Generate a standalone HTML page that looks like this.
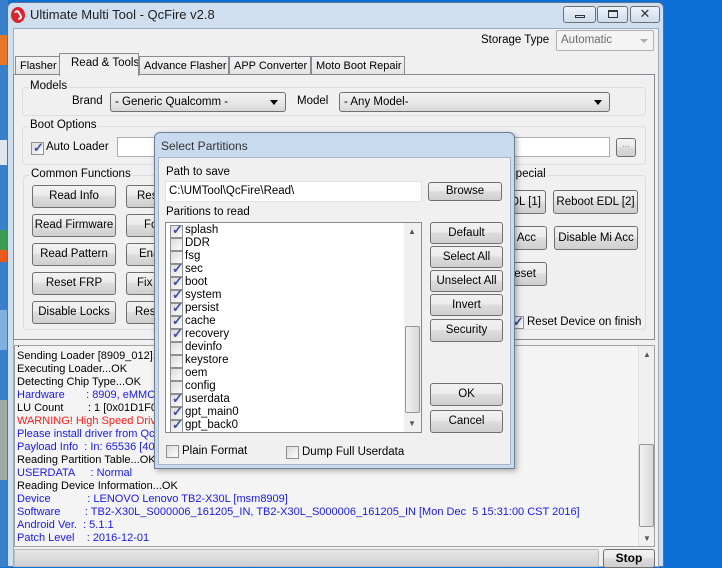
<!DOCTYPE html>
<html><head><meta charset="utf-8"><style>
*{box-sizing:border-box;margin:0;padding:0}
body{width:722px;height:567px;overflow:hidden;position:relative;background:#0b6fd6;font-family:"Liberation Sans",sans-serif;font-size:11px;color:#000}
.a{position:absolute;white-space:nowrap}
.btn{position:absolute;border:1px solid #707070;border-radius:3px;background:linear-gradient(#f2f2f2 0%,#ebebeb 45%,#dddddd 50%,#cfcfcf 100%);text-align:center;font-size:11.5px;white-space:nowrap;overflow:hidden}
.btn .rt{position:absolute;right:4px;top:0}
.grp{position:absolute;border:1px solid #d5dfe5;border-radius:4px}
.gl{position:absolute;background:#f0f0f0;padding:0 2px;font-size:11.5px;top:-8px;left:5px;white-space:nowrap}
.cb{position:absolute;width:13px;height:13px;border:1px solid #8e8f8f;background:linear-gradient(135deg,#dcdcdc,#fbfbfb)}
.cb.c::after{content:"✓";position:absolute;left:1px;top:-3px;font-size:13px;color:#3b4fa8;font-weight:bold}
.cmb{position:absolute;border:1px solid #707070;border-radius:3px;background:linear-gradient(#f2f2f2,#e8e8e8 50%,#d8d8d8);font-size:11.5px;padding:3px 4px;white-space:nowrap}
.cmb::after{content:"";position:absolute;right:7px;top:7px;border:4px solid transparent;border-top:5px solid #000}
.tab{position:absolute;top:56px;height:19px;border:1px solid #898c95;border-bottom:none;background:linear-gradient(#f3f3f3,#e3e3e3);font-size:11px;padding:3px 0 0 4px;white-space:nowrap;overflow:hidden}
.log div{height:13px;line-height:13px;white-space:nowrap;font-size:11px}
.b{color:#1a1ae6}.r{color:#ff1a1a}
.li{position:absolute;left:4px;height:13px;font-size:11.5px;line-height:13px;white-space:nowrap}
.li .cb{left:0;top:0}.li span{position:absolute;left:15px;top:-1px}
.lbl{font-size:11.5px}
</style></head><body>
<div class="a" style="left:0;top:0;width:8px;height:567px;background:#3a7fc9"></div>
<div class="a" style="left:0;top:35px;width:7px;height:30px;background:#e9772a"></div>
<div class="a" style="left:0;top:140px;width:7px;height:25px;background:#dfe6ee"></div>
<div class="a" style="left:0;top:230px;width:7px;height:20px;background:#3c9a52"></div>
<div class="a" style="left:0;top:250px;width:7px;height:12px;background:#e85b1d"></div>
<div class="a" style="left:0;top:310px;width:7px;height:40px;background:#7fb0e0"></div>
<div class="a" style="left:0;top:400px;width:7px;height:80px;background:#9ea9a8"></div>
<div class="a" style="left:7px;top:2px;width:657px;height:565px;background:#cfdff0;border:1px solid #5d7290;border-radius:6px 6px 0 0"></div>
<div class="a" style="left:13px;top:28px;width:646px;height:539px;background:#f0f0f0;border:1px solid #9aabbf"></div>
<div class="a" style="left:11px;top:7px;width:14px;height:16px;border-radius:50%;background:#d8262f"></div>
<div class="a" style="left:15px;top:10px;width:6px;height:10px;border:2px solid #fff;border-radius:4px;border-left-color:transparent;transform:rotate(-30deg)"></div>
<div class="a" style="left:30px;top:7px;font-size:13px;color:#1e1e1e">Ultimate Multi Tool - QcFire v2.8</div>
<div class="btn" style="left:563px;top:6px;width:33px;height:17px;background:linear-gradient(#eef3fa,#cfdcec)"><div class="a" style="left:11px;top:8px;width:10px;height:3px;border:1px solid #333"></div></div>
<div class="btn" style="left:597px;top:6px;width:31px;height:17px;background:linear-gradient(#eef3fa,#cfdcec)"><div class="a" style="left:10px;top:3px;width:10px;height:8px;border:1px solid #333;border-top-width:2px"></div></div>
<div class="btn" style="left:630px;top:6px;width:30px;height:17px;background:linear-gradient(#eef3fa,#cfdcec);font-size:13px;line-height:14px;color:#333">✕</div>
<div class="a lbl" style="left:481px;top:34px">Storage Type</div>
<div class="a" style="left:556px;top:30px;width:98px;height:21px;border:1px solid #adb2b5;border-radius:2px;background:#f4f4f4;color:#6d6d6d;font-size:11.5px;padding:3px 4px">Automatic<div class="a" style="right:5px;top:8px;border:4px solid transparent;border-top:4px solid #aaa"></div></div>
<div class="tab" style="left:15px;width:45px">Flasher</div>
<div class="tab" style="left:139px;width:90px">Advance Flasher</div>
<div class="tab" style="left:229px;width:82px">APP Converter</div>
<div class="tab" style="left:311px;width:94px">Moto Boot Repair</div>
<div class="a" style="left:13px;top:74px;width:642px;height:266px;border:1px solid #898c95;background:#fff"></div>
<div class="a" style="left:14px;top:75px;width:640px;height:264px;background:#f0f0f0"></div>
<div class="tab" style="left:59px;top:53px;width:80px;height:23px;background:#f0f0f0;border-color:#898c95;padding-left:11px;font-size:11.5px">Read &amp; Tools</div>
<div class="grp" style="left:22px;top:87px;width:624px;height:29px"><span class="gl">Models</span></div>
<div class="a lbl" style="left:72px;top:95px">Brand</div>
<div class="cmb" style="left:110px;top:92px;width:176px;height:20px">- Generic Qualcomm -</div>
<div class="a lbl" style="left:297px;top:95px">Model</div>
<div class="cmb" style="left:339px;top:92px;width:271px;height:20px">- Any Model-</div>
<div class="grp" style="left:22px;top:126px;width:624px;height:39px"><span class="gl">Boot Options</span></div>
<div class="cb c" style="left:31px;top:142px"></div>
<div class="a lbl" style="left:46px;top:141px">Auto Loader</div>
<div class="a" style="left:117px;top:137px;width:493px;height:20px;border:1px solid #abadb3;background:#fff"></div>
<div class="btn" style="left:616px;top:138px;width:20px;height:19px;color:#888;font-size:10px">...</div>
<div class="grp" style="left:23px;top:175px;width:623px;height:155px"><span class="gl">Common Functions</span></div>
<div class="a lbl" style="left:506px;top:168px;background:#f0f0f0;padding:0 2px">Special</div>
<div class="btn" style="left:32px;top:185px;width:84px;height:23px;line-height:21px">Read Info</div>
<div class="btn" style="left:32px;top:214px;width:84px;height:23px;line-height:21px">Read Firmware</div>
<div class="btn" style="left:32px;top:243px;width:84px;height:23px;line-height:21px">Read Pattern</div>
<div class="btn" style="left:32px;top:272px;width:84px;height:23px;line-height:21px">Reset FRP</div>
<div class="btn" style="left:32px;top:301px;width:84px;height:23px;line-height:21px">Disable Locks</div>
<div class="btn" style="left:126px;top:185px;width:60px;height:23px;line-height:21px;text-align:left;padding-left:10px">Reset</div>
<div class="btn" style="left:126px;top:214px;width:60px;height:23px;line-height:21px;text-align:left;padding-left:17px">Format</div>
<div class="btn" style="left:126px;top:243px;width:60px;height:23px;line-height:21px;text-align:left;padding-left:12px">Enable</div>
<div class="btn" style="left:126px;top:272px;width:60px;height:23px;line-height:21px;text-align:left;padding-left:10px">Fix Stock</div>
<div class="btn" style="left:126px;top:301px;width:60px;height:23px;line-height:21px;text-align:left;padding-left:8px">Restore</div>
<div class="btn" style="left:480px;top:190px;width:66px;height:24px;line-height:22px"><span class="rt">Reboot EDL [1]</span></div>
<div class="btn" style="left:553px;top:190px;width:85px;height:24px;line-height:22px">Reboot EDL [2]</div>
<div class="btn" style="left:480px;top:226px;width:67px;height:24px;line-height:22px"><span class="rt" style="right:10px">Enable Mi Acc</span></div>
<div class="btn" style="left:554px;top:226px;width:84px;height:24px;line-height:22px">Disable Mi Acc</div>
<div class="btn" style="left:480px;top:262px;width:67px;height:24px;line-height:22px"><span class="rt" style="right:10px">Reset</span></div>
<div class="cb c" style="left:511px;top:316px"></div>
<div class="a lbl" style="left:527px;top:316px">Reset Device on finish</div>
<div class="a" style="left:14px;top:345px;width:641px;height:202px;border:1px solid #a0a0a0;background:#f4f4f4;overflow:hidden">
<div class="log a" style="left:2px;top:-8px;width:620px;overflow:hidden">
<div style="height:12px">.</div>
<div>Sending Loader [8909_012]...OK</div>
<div>Executing Loader...OK</div>
<div>Detecting Chip Type...OK</div>
<div class="b">Hardware&nbsp;&nbsp;&nbsp;&nbsp;&nbsp;&nbsp;&nbsp;: 8909, eMMC, 16 GiB</div>
<div>LU Count&nbsp;&nbsp;&nbsp;&nbsp;&nbsp;&nbsp;&nbsp;&nbsp;: 1 [0x01D1F000]</div>
<div class="r">WARNING! High Speed Driver not found!</div>
<div class="b">Please install driver from QcFire folder</div>
<div class="b">Payload Info&nbsp;&nbsp;: In: 65536 [4096] Out: 1048576</div>
<div>Reading Partition Table...OK</div>
<div class="b">USERDATA&nbsp;&nbsp;&nbsp;&nbsp;&nbsp;: Normal</div>
<div>Reading Device Information...OK</div>
<div class="b">Device&nbsp;&nbsp;&nbsp;&nbsp;&nbsp;&nbsp;&nbsp;&nbsp;&nbsp;&nbsp;&nbsp;&nbsp;: LENOVO Lenovo TB2-X30L [msm8909]</div>
<div class="b">Software&nbsp;&nbsp;&nbsp;&nbsp;&nbsp;&nbsp;&nbsp;&nbsp;: TB2-X30L_S000006_161205_IN, TB2-X30L_S000006_161205_IN [Mon Dec&nbsp; 5 15:31:00 CST 2016]</div>
<div class="b">Android Ver.&nbsp;&nbsp;: 5.1.1</div>
<div class="b">Patch Level&nbsp;&nbsp;&nbsp;&nbsp;: 2016-12-01</div>
</div>
<div class="a" style="left:623px;top:0;width:17px;height:200px;background:#efefef;border-left:1px solid #e0e0e0"></div>
<div class="a" style="left:628px;top:4px;font-size:8px;color:#555">▲</div>
<div class="a" style="left:628px;top:188px;font-size:8px;color:#555">▼</div>
<div class="a" style="left:624px;top:98px;width:15px;height:83px;border:1px solid #979797;border-radius:2px;background:linear-gradient(90deg,#f2f2f2,#d8d8d8)"></div>
</div>
<div class="a" style="left:14px;top:549px;width:585px;height:18px;border:1px solid #bcbcbc;border-radius:2px;background:linear-gradient(#e6e6e6,#d0d0d0)"></div>
<div class="btn" style="left:603px;top:549px;width:52px;height:19px;font-weight:bold;line-height:17px;font-size:12px">Stop</div>
<div class="a" style="left:154px;top:132px;width:361px;height:337px;background:#c8daee;border:1px solid #6d7f95;border-radius:6px 6px 0 0;box-shadow:2px 2px 6px rgba(0,0,0,.3)"></div>
<div class="a" style="left:161px;top:139px;font-size:12px;color:#333">Select Partitions</div>
<div class="a" style="left:158px;top:157px;width:353px;height:308px;background:#f0f0f0;border:1px solid #a7b5c5"></div>
<div class="a lbl" style="left:166px;top:166px">Path to save</div>
<div class="a" style="left:165px;top:181px;width:257px;height:21px;border:1px solid #e3e3e3;background:#fff;font-size:11.5px;padding:3px 3px">C:\UMTool\QcFire\Read\</div>
<div class="btn" style="left:428px;top:182px;width:74px;height:19px;line-height:17px">Browse</div>
<div class="a lbl" style="left:166px;top:206px">Paritions to read</div>
<div class="a" style="left:165px;top:222px;width:257px;height:211px;border:1px solid #828790;background:#fff;overflow:hidden">
<div class="li" style="top:2px"><div class="cb c"></div><span>splash</span></div>
<div class="li" style="top:15px"><div class="cb"></div><span>DDR</span></div>
<div class="li" style="top:28px"><div class="cb"></div><span>fsg</span></div>
<div class="li" style="top:41px"><div class="cb c"></div><span>sec</span></div>
<div class="li" style="top:54px"><div class="cb c"></div><span>boot</span></div>
<div class="li" style="top:67px"><div class="cb c"></div><span>system</span></div>
<div class="li" style="top:80px"><div class="cb c"></div><span>persist</span></div>
<div class="li" style="top:93px"><div class="cb c"></div><span>cache</span></div>
<div class="li" style="top:106px"><div class="cb c"></div><span>recovery</span></div>
<div class="li" style="top:119px"><div class="cb"></div><span>devinfo</span></div>
<div class="li" style="top:132px"><div class="cb"></div><span>keystore</span></div>
<div class="li" style="top:145px"><div class="cb"></div><span>oem</span></div>
<div class="li" style="top:158px"><div class="cb"></div><span>config</span></div>
<div class="li" style="top:171px"><div class="cb c"></div><span>userdata</span></div>
<div class="li" style="top:184px"><div class="cb c"></div><span>gpt_main0</span></div>
<div class="li" style="top:197px"><div class="cb c"></div><span>gpt_back0</span></div>
<div class="a" style="left:238px;top:0;width:17px;height:209px;background:#f0f0f0"></div>
<div class="a" style="left:242px;top:4px;font-size:8px;color:#555">▲</div>
<div class="a" style="left:242px;top:196px;font-size:8px;color:#555">▼</div>
<div class="a" style="left:239px;top:103px;width:15px;height:87px;border:1px solid #979797;border-radius:2px;background:linear-gradient(90deg,#f2f2f2,#d8d8d8)"></div>
</div>
<div class="btn" style="left:430px;top:222px;width:73px;height:22px;line-height:20px">Default</div>
<div class="btn" style="left:430px;top:246px;width:73px;height:22px;line-height:20px">Select All</div>
<div class="btn" style="left:430px;top:270px;width:73px;height:22px;line-height:20px">Unselect All</div>
<div class="btn" style="left:430px;top:294px;width:73px;height:22px;line-height:20px">Invert</div>
<div class="btn" style="left:430px;top:319px;width:73px;height:23px;line-height:21px">Security</div>
<div class="btn" style="left:430px;top:383px;width:73px;height:23px;line-height:21px">OK</div>
<div class="btn" style="left:430px;top:410px;width:73px;height:23px;line-height:21px">Cancel</div>
<div class="cb" style="left:166px;top:445px"></div>
<div class="a lbl" style="left:182px;top:445px">Plain Format</div>
<div class="cb" style="left:286px;top:446px"></div>
<div class="a lbl" style="left:302px;top:446px">Dump Full Userdata</div>
</body></html>
